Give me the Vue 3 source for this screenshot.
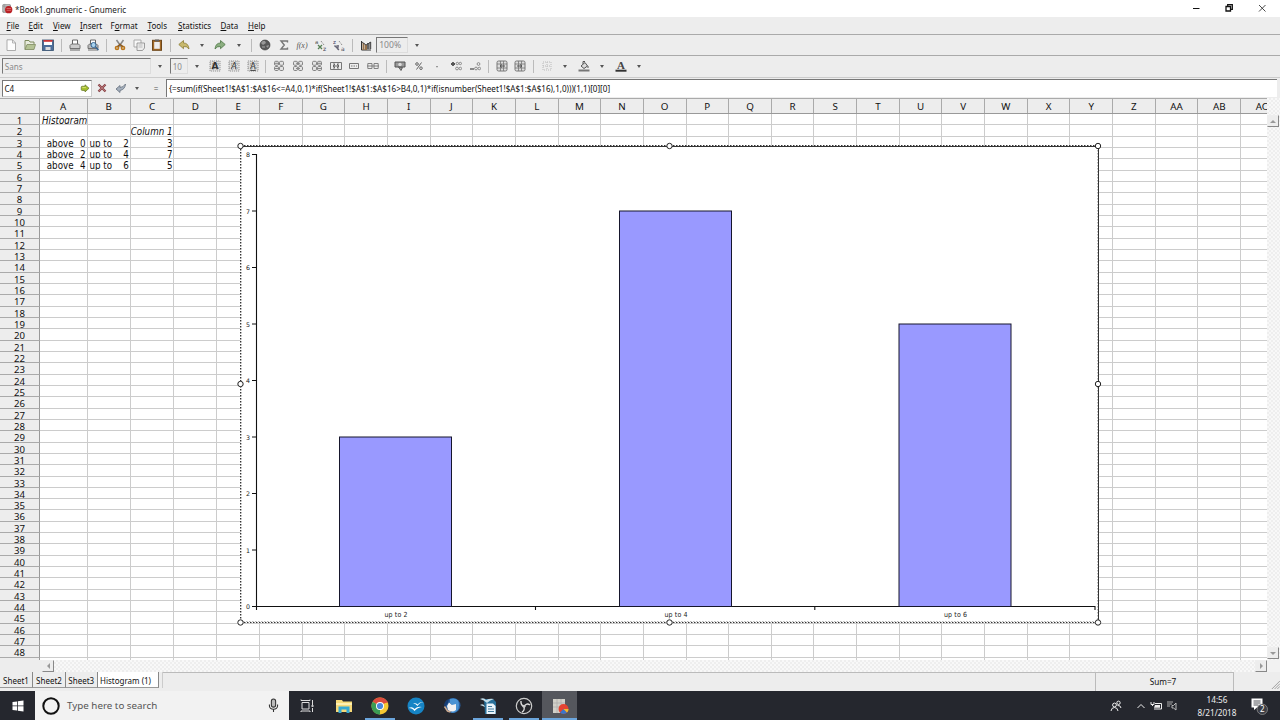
<template>
	<div class="desktop">
		<header class="titlebar">
			<svg class="app-icon" viewBox="0 0 12 12" v-html="ICONS.app" />
			<span class="title">*Book1.gnumeric - Gnumeric</span>
			<div class="window-buttons">
				<svg viewBox="0 0 10 10"><path d="M2 5.5h6.500" stroke="#111" /></svg>
				<svg viewBox="0 0 10 10">
					<path d="M2 3.5h4.5V8H2zM3.7 3V1.7h4.6v4.6H7" fill="none" stroke="#111" stroke-width="1.3" />
				</svg>
				<svg viewBox="0 0 10 10">
					<path d="M2 2l6.5 6.5M8.500 2L2 8.500" stroke="#333" stroke-width="0.9" />
				</svg>
			</div>
		</header>

		<nav class="menubar">
			<span v-for="item in menus" :key="item.label" :style="{ width: item.width + 'px' }">
				{{ item.label.slice(0, item.key) }}<u>{{ item.label[item.key] }}</u>{{ item.label.slice(item.key + 1) }}
			</span>
		</nav>

		<div class="toolbar">
			<template v-for="(name, i) in standardTools" :key="i">
				<i v-if="name === '|'" class="sep" />
				<i v-else-if="name === 'v'" class="drop" />
				<span v-else class="tool"><svg viewBox="0 0 12 12" v-html="ICONS[name]" /></span>
			</template>
			<span class="entry zoom">100%</span>
			<i class="drop" />
		</div>

		<div class="toolbar format">
			<span class="entry font">Sans</span>
			<i class="drop" />
			<span class="entry size">10</span>
			<i class="drop" />
			<template v-for="(name, i) in formatTools" :key="i">
				<i v-if="name === '|'" class="sep" />
				<i v-else-if="name === 'v'" class="drop" />
				<span v-else class="tool"><svg viewBox="0 0 12 12" v-html="ICONS[name]" /></span>
			</template>
		</div>

		<div class="formula-bar">
			<div class="cell-name">
				<span>C4</span>
				<svg viewBox="0 0 10 10">
					<path d="M.8 3.500Q.8 2.500 2 2.500H5V.9L9.500 4.700 5 8.800V7.200H2Q.8 7.200.8 6z" fill="#a3bd2c" stroke="#66752a" stroke-width=".8" />
					<path d="M2 4h4" stroke="#dce87a" />
				</svg>
			</div>
			<svg class="f-cancel" viewBox="0 0 10 10">
				<path d="M1.500 1.500l7 7M8.500 1.500l-7 7" stroke="#8a4448" stroke-width="2.3" />
				<path d="M2 2l6 6M8 2L2 8" stroke="#d09090" stroke-width=".6" />
			</svg>
			<svg class="f-accept" viewBox="0 0 12 10">
				<path d="M1 6l4-3.500v2q3 0 5.500-3.500Q10 6.500 5 7.500V9.500z" fill="#a5b0bd" stroke="#65707e" stroke-width=".8" />
			</svg>
			<i class="drop" />
			<span class="equals">=</span>
			<div class="formula">{=sum(if(Sheet1!$A$1:$A$16&lt;=A4,0,1)*if(Sheet1!$A$1:$A$16&gt;B4,0,1)*if(isnumber(Sheet1!$A$1:$A$16),1,0)))(1,1)[0][0]</div>
		</div>

		<main class="sheet">
			<div class="grid-area">
				<div class="col-heads">
					<div class="corner"></div>
					<div v-for="col in columns" :key="col.name" class="col-head" :style="{ width: col.width + 'px' }">
						{{ col.name }}
					</div>
				</div>
				<div v-for="row in 48" :key="row" class="row">
					<div class="row-head"><span>{{ row }}</span></div>
					<div
						v-for="col in columns"
						:key="col.name"
						class="cell"
						:class="[`col-${col.name}`, { italic: row < 3, left: row === 1 }]"
						:style="{ width: col.width + 'px' }"
					>
						<span v-for="(part, i) in cells[col.name + row]" :key="i">{{ part }}</span>
					</div>
				</div>
				<div class="row rest">
					<div class="row-head"></div>
					<div v-for="col in columns" :key="col.name" class="cell" :style="{ width: col.width + 'px' }"></div>
				</div>

				<svg class="chart" width="866" height="486" viewBox="236 141 866 486">
					<rect x="240.500" y="146.500" width="858" height="476.500" fill="#fff" />
					<path d="M241 146.500H1098.500V622.500" fill="none" stroke="#333" />
					<path d="M240.500 146V622.500H1098.500M241 145.500H1098" fill="none" stroke="#333" stroke-dasharray="1.500 1.500" />
					<path d="M241.500 146V621.500H1098M1097.500 147V622" fill="none" stroke="#888" stroke-width=".6" stroke-dasharray="1.500 1.500" />
					<path d="M256.500 154V610M252 606.500H1095V610M535.500 606v4M814.800 606v4" fill="none" stroke="#111" stroke-width="1.100" />
					<g v-for="n in 9" :key="n">
						<path :d="`M252 ${tickY(n - 1)}h5`" stroke="#111" />
						<text x="250" :y="tickY(n - 1) + 2.500" text-anchor="end">{{ n - 1 }}</text>
					</g>
					<g v-for="bar in bars" :key="bar.label">
						<rect
							:x="bar.x - 56"
							:y="tickY(bar.value)"
							width="112"
							:height="606.5 - tickY(bar.value)"
							fill="#9999ff"
							stroke="#16162c"
						/>
						<text class="bar-label" :x="bar.x + 0.5" y="617.200" text-anchor="middle" textLength="23">{{ bar.label }}</text>
					</g>
					<circle v-for="(p, i) in handles" :key="i" :cx="p[0]" :cy="p[1]" r="2.700" fill="#fff" stroke="#222" />
				</svg>
			</div>
			<div class="vscroll">
				<div class="scroll-btn up"></div>
				<div class="scroll-btn down"></div>
			</div>
		</main>

		<div class="hscroll">
			<div class="hpad"></div>
			<div class="track">
				<div class="scroll-btn prev"></div>
				<div class="scroll-btn next"></div>
			</div>
			<div class="hend"></div>
		</div>

		<div class="bottom">
			<div class="tabs">
				<span v-for="tab in tabs" :key="tab.name" :class="{ active: tab.active }" :style="{ width: tab.width + 'px' }">
					{{ tab.name }}
				</span>
			</div>
			<div class="status"></div>
			<div class="sum">Sum=7</div>
			<svg class="grip" viewBox="0 0 10 10"><path d="M1 10l9-9M4 10l6-6M7 10l3-3" stroke="#999" /></svg>
		</div>

		<footer class="taskbar">
			<div class="start">
				<svg viewBox="0 0 12 12"><path d="M.5 2L5 1.400v4.100H.5zM5.800 1.300L11.500.5v5H5.800zM.5 6.300H5v4.200L.5 9.900zM5.800 6.300h5.700v5.200l-5.700-.8z" fill="#fff" /></svg>
			</div>
			<div class="search">
				<svg class="cortana" viewBox="0 0 20 20"><circle cx="10" cy="10" r="7.700" fill="none" stroke="#111" stroke-width="2" /></svg>
				<span>Type here to search</span>
				<svg class="mic" viewBox="0 0 10 14">
					<rect x="3" y="1" width="4" height="7.500" rx="2" fill="#bbb" stroke="#333" />
					<path d="M1.200 6v1.500Q1.500 10.500 5 10.500T8.800 7.500V6M5 10.500V13" fill="none" stroke="#333" />
				</svg>
			</div>
			<div v-for="app in apps" :key="app.icon" class="app" :class="{ running: app.running, focused: app.focused }" :style="{ width: app.width + 'px' }">
				<svg viewBox="0 0 18 18" v-html="ICONS[app.icon]" />
			</div>
			<div class="tray">
				<svg class="people" viewBox="0 0 12 12" fill="none" stroke="#eee"><circle cx="4.500" cy="5" r="1.900" /><circle cx="8.500" cy="2.800" r="1.700" /><path d="M1 11q.4-3.500 3.500-3.500T8 11M7.500 5.500Q10.500 5 11 8" /></svg>
				<svg class="chevron" viewBox="0 0 10 10"><path d="M1.500 7L5 3.500 8.500 7" fill="none" stroke="#eee" /></svg>
				<svg class="battery" viewBox="0 0 12 10"><path d="M1 1v2.500h3V1M2.500 3.500V5M4 8h7.500V2.500H5" fill="none" stroke="#eee" /><path d="M5 4h5v2.800H4z" fill="#eee" /></svg>
				<svg class="sound" viewBox="0 0 12 10"><path d="M6 4.500h1.500L10 2v7L7.500 7H6z" fill="none" stroke="#bbb" /><path d="M1 1h6M1 3h5M1 5h3" stroke="#ccc" stroke-width=".8" /></svg>
				<div class="clock"><span>14:56</span><span>8/21/2018</span></div>
				<svg class="notes" viewBox="0 0 20 18">
					<path d="M1.500 1.500h11v9H7L4 13v-2.500H1.500z" fill="#fff" />
					<path d="M3.500 4h7M3.500 6h7M3.500 8h5" stroke="#25272e" stroke-width=".8" />
					<circle cx="12.300" cy="12.300" r="5.200" fill="#3b3d44" stroke="#999" stroke-width=".7" />
					<text x="12.300" y="15.200" text-anchor="middle">2</text>
				</svg>
			</div>
		</footer>
	</div>
</template>

<script setup>
const align = (d) =>
	`<g fill="#e4e4e4" stroke="#777" stroke-width=".9"><rect x="1.500" y="1.300" width="4" height="4" rx="1.200"/><rect x="6.500" y="1.300" width="4" height="4" rx="1.200"/><rect x="1.500" y="6.500" width="4" height="4" rx="1.200"/><rect x="6.500" y="6.500" width="4" height="4" rx="1.200"/></g><path d="${d}" stroke="#888"/>`;
const letter = (style) =>
	`<rect x=".5" y=".5" width="11" height="11" fill="#ddd"/><path d="M1 1h10v10H1zM1 4h10M1 8h10M4 1v10M8 1v10" fill="none" stroke="#888" stroke-width=".8" stroke-dasharray="1 1"/><text x="6" y="9.200" text-anchor="middle" font-size="9" font-family="DejaVu Sans" fill="#333" style="${style}">A</text>`;

const ICONS = {
	app: '<path d="M1 2h8v8H1z" fill="#ddd" stroke="#777"/><path d="M3 1v8M1 4h8" stroke="#999"/><circle cx="7.300" cy="7.300" r="4" fill="#b91f24"/><path d="M5 6h5M5 8h5" stroke="#d66"/>',
	new: '<path d="M2 .8h5.500L10.500 4v7.500H2z" fill="#fdfdfd" stroke="#999" stroke-width=".8"/><path d="M7.500 1v3h3" fill="none" stroke="#999" stroke-width=".7"/>',
	open: '<path d="M1 10.500V1.500h4l1 1.500h4v2" fill="#e8ebdd" stroke="#7e8a5e"/><path d="M1 10.500L3 5.500h8.500l-1.500 5z" fill="#b4c294" stroke="#7e8a5e" stroke-width=".8"/>',
	save: '<rect x=".5" y="1" width="11" height="10.500" fill="#4c6d9a" stroke="#34506f" stroke-width=".8"/><path d="M2 1h8v5H2z" fill="#fff"/><path d="M1.500 1h9v1.800h-9z" fill="#c83334"/><path d="M3.500 8h5v3h-5z" fill="#ddd"/>',
	print: '<path d="M3.500 5V1h5v4" fill="#fff" stroke="#666"/><path d="M1 9.500V6.500L2.500 5h7L11 6.500v3z" fill="#ccc" stroke="#666" stroke-width=".9"/><path d="M1 11h10" stroke="#666"/>',
	preview: '<path d="M3.500 5V1h5v4" fill="#fff" stroke="#666"/><path d="M1 9.500V6.500L2.500 5h7L11 6.500v3zM1 11h10" fill="#bbb" stroke="#666" stroke-width=".9"/><circle cx="6.500" cy="6" r="2.500" fill="#a9d3ef" stroke="#346491"/><path d="M8.500 8l3 3" stroke="#346491" stroke-width="1.500"/>',
	cut: '<path d="M2.500 1l5 7M9.500 1l-5 7" stroke="#888" stroke-width="1.500"/><circle cx="3" cy="9" r="1.500" fill="none" stroke="#bd781b" stroke-width="1.700"/><circle cx="9" cy="9" r="1.500" fill="none" stroke="#bd781b" stroke-width="1.700"/><path d="M3.500 7.500L6 5.500l3 2" fill="none" stroke="#8a5a22" stroke-width="1.500"/>',
	copy: '<path d="M1 1h7v7H1z" fill="#f8f8f8" stroke="#aaa"/><path d="M4 4h7.500v5l-2 2.500H4z" fill="#eee" stroke="#888" stroke-width=".8"/><path d="M5.500 6h4M5.500 8h4" stroke="#bbb"/>',
	paste: '<rect x="1.500" y="1.300" width="9" height="10" fill="#a46b28" stroke="#6d471b"/><path d="M3.200 3h5.600v6.800H3.200z" fill="#eee"/><path d="M4 .5h4v2H4z" fill="#666"/>',
	undo: '<path d="M.8 5.500L5.500 1.500v2.500q5 0 5.500 6-2-3-5.500-2.500v2.200z" fill="#c8b96c" stroke="#8c7c35" stroke-width=".8"/>',
	redo: '<path d="M11.200 5.500L6.500 1.500v2.500q-5 0-5.500 6 2-3 5.500-2.500v2.200z" fill="#8caf81" stroke="#4e7645" stroke-width=".8"/>',
	link: '<circle cx="6" cy="6" r="5" fill="#595959" stroke="#333" stroke-width=".6"/><path d="M2 4q2-3 4-2l1 2-3 2zM7 7l3-1-1 3z" fill="#999"/><path d="M3 8h3" stroke="#aaa"/>',
	sum: '<path d="M9.500 3.500V2H3l3.300 4L3 10h6.500V8.500" fill="none" stroke="#777" stroke-width="1.400"/>',
	fx: '<text x="6" y="8.800" text-anchor="middle" font-size="8" font-style="italic" font-family="Liberation Serif" fill="#555">f(x)</text>',
	asc: '<text x="0" y="5" font-size="5.500" font-family="DejaVu Sans" fill="#555">a</text><path d="M3 6l4 4M7 6l-4 4" stroke="#568054" stroke-width="1.300"/><path d="M6 2l3 4" stroke="#777" stroke-dasharray="1 1"/><text x="8" y="11.500" font-size="6" font-family="DejaVu Sans" fill="#445">z</text>',
	desc: '<text x="0" y="5" font-size="5.500" font-family="DejaVu Sans" fill="#446">z</text><path d="M2 7l4 4M5 6v5M1 7h5" stroke="#667" stroke-width="1.200"/><path d="M6 2l3 4" stroke="#777" stroke-dasharray="1 1"/><text x="8" y="11.500" font-size="6" font-family="DejaVu Sans" fill="#445">a</text>',
	chart: '<path d="M1.500 2v9h9.500" fill="none" stroke="#333"/><path d="M3.500 4v7M6 6v5" stroke="#94704a" stroke-width="2"/><path d="M8 4v6M10.300 3v7" stroke="#555" stroke-width="1.800"/><path d="M2 3l4 3 5-3" fill="none" stroke="#444"/>',
	bold: letter("font-weight:bold"),
	italic: letter("font-style:italic;font-size:8px"),
	underline: letter("text-decoration:underline;font-size:8px"),
	left: align("M2 3.300h3M2 8.500h3"),
	center: align("M4 3.300h4M4 8.500h4"),
	right: align("M7 3.300h3M7 8.500h3"),
	span: '<path d="M.5 2.500h11v7H.5zM4 2.500v7M8 2.500v7" fill="none" stroke="#777"/><path d="M3 6h6M5 4L3 6l2 2M7 4l2 2-2 2" fill="none" stroke="#666"/>',
	merge: '<path d="M1.500 3.500h9v5h-9z" fill="none" stroke="#777"/><path d="M3 6h6" stroke="#777" stroke-dasharray="1.500 1"/>',
	split: '<path d="M.8 3.500h4.200v5H.8zM7 3.500h4.200v5H7zM0 6h12" fill="none" stroke="#777" stroke-width=".9"/>',
	money: '<path d="M1 2h10v5H1z" fill="#999" stroke="#555"/><circle cx="6" cy="4.500" r="1.700" fill="#ddd"/><path d="M4.500 7l4 .5L7 10.500z" fill="#999" stroke="#555" stroke-width=".9"/>',
	percent: '<path d="M8.500 2.500l-5 7" stroke="#666"/><circle cx="4" cy="4" r="1.300" fill="none" stroke="#666"/><circle cx="8" cy="8.200" r="1.300" fill="none" stroke="#666"/>',
	comma: '<path d="M5.500 6h1v1.300h-1z" fill="#444"/>',
	more: '<path d="M1 4h4M3 2v4" stroke="#555" stroke-width="1.800"/><g fill="none" stroke="#777" stroke-width=".8"><circle cx="7.300" cy="3.500" r="1.200"/><circle cx="7" cy="8.500" r="1.400"/><circle cx="10.300" cy="8.500" r="1.300"/><circle cx="10.300" cy="3.500" r="1.200"/></g>',
	less: '<path d="M1 9h4" stroke="#666" stroke-width="1.500"/><g fill="none" stroke="#777" stroke-width=".8"><circle cx="9.500" cy="4" r="1.400"/><circle cx="7" cy="8.500" r="1.400"/><circle cx="10.300" cy="8.500" r="1.300"/></g>',
	outdent: '<rect x="1" y="1" width="10" height="10" rx="1.500" fill="#ddd" stroke="#777"/><path d="M1 4h10M1 8h10M4.500 1v10M7.500 1v10" fill="none" stroke="#777" stroke-width=".8"/><path d="M9 6H4M6 4.500L4 6l2 1.500" fill="none" stroke="#555"/>',
	indent: '<rect x="1" y="1" width="10" height="10" rx="1.500" fill="#ddd" stroke="#777"/><path d="M1 4h10M1 8h10M4.500 1v10M7.500 1v10" fill="none" stroke="#777" stroke-width=".8"/><path d="M3 6h5M6 4.500L8 6 6 7.500" fill="none" stroke="#555"/>',
	border: '<path d="M2 2h8v8H2zM6 2v8M2 6h8" fill="none" stroke="#bbb" stroke-dasharray="1 1"/>',
	fill: '<path d="M3 6l4-3.500L9.500 6 6 8.500z" fill="#ddd" stroke="#555"/><path d="M5 4V1.500h2M10 6v2" fill="none" stroke="#555"/><path d="M.5 10.500h11" stroke="#777" stroke-width="2"/>',
	color: '<text x="6" y="9" text-anchor="middle" font-size="11" font-weight="bold" font-family="Liberation Serif" fill="#444">A</text><path d="M.5 10.700h11" stroke="#333" stroke-width="2"/>',
	taskview: '<path d="M4 5.500h7v6.500H4zM3 3.500V2.500M3 3.500h9V2.500M3 15v-1h9v1M14.500 3v5M14.500 11v4" fill="none" stroke="#ddd"/><path d="M13.500 9h2" stroke="#fff" stroke-width="1.500"/>',
	explorer: '<path d="M1 3h6l1 1.500h9V15H1z" fill="#f6d978"/><path d="M1 6h16v2H1z" fill="#fff0b0"/><path d="M3.500 16V9.500h11V16h-3v-3.500h-5V16z" fill="#35a9d4"/>',
	chrome: '<circle cx="9" cy="9" r="8.500" fill="#f6c833"/><path d="M9 9L1.600 4.750A8.500 8.500 0 0 1 16.400 4.750z" fill="#dc4b3e"/><path d="M9 9L1.600 4.750A8.500 8.500 0 0 0 9 17.500z" fill="#3b9c55"/><path d="M9 5h7.500" stroke="#dc4b3e" stroke-width="1.500"/><circle cx="9" cy="9" r="4" fill="#fff"/><circle cx="9" cy="9" r="3.100" fill="#4b88db"/>',
	gulls: '<circle cx="9" cy="9" r="8.500" fill="#1684c5"/><path d="M6 6.500q3-1 4.500 1 2-3 6-2.500-4 .5-6 4-1.500-2.500-4.500-2.500M1.500 11q4-2 6 1 3-3 7.500-2-4.500.5-7.500 4-2-3-6-3" fill="#fff"/>',
	thunderbird: '<circle cx="10" cy="8.500" r="7.500" fill="#285e9d"/><path d="M7 2q9-2 9 6t-8 8q5-6-1-10z" fill="#4a93d3"/><path d="M4 9l2-3.500 3 2.500 4-1v6q-4 3-8 0z" fill="#f2f2f2"/><path d="M1 8q1-5 5-6L5 6 2 10z" fill="#183d72"/><path d="M1.500 9.500l3 4.500 3 1" fill="none" stroke="#cba990" stroke-width="1.500"/>',
	writer: '<path d="M5 2h9l3 3v12H6z" fill="#276f99"/><path d="M7.500 6.500h6.500l2.500 2.500v8h-9z" fill="#eaf4fb"/><path d="M9 9.500h4M9 12h6M9 14.500h6" stroke="#427d9e"/><path d="M1 2q4-2 6 1 4-2 8-1-4 1-7 4Q5 3 1 2M1 8q4-2 5 2-2-1-5-2" fill="#c2dce8"/>',
	obs: '<circle cx="9" cy="9" r="7.700" fill="#25262b" stroke="#ccc" stroke-width="1.200"/><g fill="none" stroke="#ddd" stroke-width="1.400"><path d="M9 9.500Q5.500 8 6 4M9 9.500Q11.500 5.500 15 8M9 9.500q1 4-2 5.500"/></g><circle cx="9" cy="9.300" r="1.500" fill="#ccc"/>',
	gnumeric: '<path d="M2 2h12v14H2z" fill="#d1d0c8"/><path d="M2 6h12M2 10h12M6 2v14M10 2v14" stroke="#aaa" stroke-width=".7"/><circle cx="12.500" cy="12" r="5" fill="#e44332"/><path d="M12.500 12L9 15.600A5 5 0 0 0 16 15.600z" fill="#3976cb"/><path d="M12.500 12l3.500 3.500q1.500-1.500 1.500-3.500z" fill="#efbd2d"/>',
};

const menus = [
	{ label: "File", key: 0, width: 22 },
	{ label: "Edit", key: 0, width: 24.5 },
	{ label: "View", key: 0, width: 27 },
	{ label: "Insert", key: 0, width: 30.5 },
	{ label: "Format", key: 1, width: 37 },
	{ label: "Tools", key: 0, width: 30.5 },
	{ label: "Statistics", key: 0, width: 42.5 },
	{ label: "Data", key: 0, width: 27.5 },
	{ label: "Help", key: 0, width: 30 },
];
const standardTools = "new open save | print preview | cut copy paste | undo v redo v | link sum fx asc desc | chart".split(" ");
const formatTools =
	"bold italic underline | left center right span merge split | money percent comma more less | outdent indent | border v fill v color v".split(" ");

const names = [..."ABCDEFGHIJKLMNOPQRSTUVWXYZ", "AA", "AB", "AC"];
const firstWidths = [47.5, 43.2, 43.8, 42.8];
const columns = names.map((name, i) => ({ name, width: firstWidths[i] ?? 42.66 }));
const cells = {
	A1: ["Histogram"],
	C2: ["Column 1"],
	A3: ["above", "0"],
	B3: ["up to", "2"],
	C3: ["3"],
	A4: ["above", "2"],
	B4: ["up to", "4"],
	C4: ["7"],
	A5: ["above", "4"],
	B5: ["up to", "6"],
	C5: ["5"],
};

const tickY = (n) => 606.5 - n * 56.5;
const bars = [
	{ label: "up to 2", value: 3, x: 395.5 },
	{ label: "up to 4", value: 7, x: 675.5 },
	{ label: "up to 6", value: 5, x: 955 },
];
const handles = [
	[240.5, 146], [669.5, 146], [1098, 146],
	[240.5, 384], [1098, 384],
	[240.5, 622.5], [669.5, 622.5], [1098, 622.5],
];

const tabs = [
	{ name: "Sheet1", width: 33 },
	{ name: "Sheet2", width: 33 },
	{ name: "Sheet3", width: 31.5 },
	{ name: "Histogram (1)", width: 61, active: true },
];
const apps = [
	{ icon: "taskview", width: 36 },
	{ icon: "explorer", width: 37 },
	{ icon: "chrome", width: 36, running: true },
	{ icon: "gulls", width: 36 },
	{ icon: "thunderbird", width: 36 },
	{ icon: "writer", width: 36, running: true },
	{ icon: "obs", width: 36, running: true },
	{ icon: "gnumeric", width: 35, running: true, focused: true },
];
</script>

<style>
body {
	margin: 0;
}
</style>

<style scoped>
* {
	box-sizing: border-box;
}
.desktop {
	display: flex;
	flex-direction: column;
	width: 1280px;
	height: 720px;
	overflow: hidden;
	background: #ededed;
	color: #111;
	font: 8.1px "Noto Sans", sans-serif;
}
svg {
	flex: none;
	display: block;
}
.titlebar {
	display: flex;
	align-items: center;
	height: 17px;
	padding-left: 1.5px;
	background: #fff;
}
.app-icon {
	width: 11px;
	height: 11px;
}
.title {
	margin: 1px 0 0 2.5px;
	font-size: 8.1px;
	color: #222;
}
.window-buttons {
	display: flex;
	gap: 23px;
	margin-left: auto;
	padding: 0 13px 2px 0;
}
.window-buttons svg {
	width: 10px;
	height: 10px;
}
.menubar {
	display: flex;
	align-items: center;
	height: 18px;
	padding-left: 6.5px;
	border-bottom: 1px solid #aaa;
	white-space: nowrap;
	font-size: 8px;
}
.menubar span {
	flex: none;
}
.toolbar {
	display: flex;
	align-items: center;
	height: 21px;
	padding-left: 1.7px;
	border-bottom: 1px solid #aaa;
}
.tool {
	display: flex;
	justify-content: center;
	width: 18.6px;
}
.tool svg {
	width: 12px;
	height: 12px;
}
.format {
	height: 22px;
	padding-bottom: 1px;
	border-bottom-color: #ccc;
}
.format .tool {
	width: 18.75px;
}
.sep {
	flex: none;
	width: 8px;
	height: 13px;
	background: linear-gradient(#bbb, #bbb) center / 1px 100% no-repeat;
}
.drop {
	display: flex;
	justify-content: center;
	width: 18px;
}
.drop::after {
	content: "";
	border: 2.5px solid transparent;
	border-top: 3px solid #555;
	border-bottom: 0;
}
.entry {
	height: 16px;
	padding-left: 2px;
	border: 1px solid #ddd;
	border-top-color: #777;
	border-left-color: #777;
	color: #8a8a8a;
	line-height: 15px;
	font-size: 8.1px;
}
.zoom {
	width: 32px;
	margin-left: 1px;
	font-size: 8.6px;
}
.font {
	width: 149px;
}
.size {
	width: 18px;
	margin-left: 1px;
}
.formula-bar {
	display: flex;
	align-items: center;
	height: 20px;
	padding-left: 1.5px;
}
.cell-name {
	display: flex;
	align-items: center;
	justify-content: space-between;
	width: 90px;
	height: 17px;
	padding: 0 1px 0 2px;
	border: 1px solid #ccc;
	border-top-color: #777;
	border-left-color: #777;
	background: #fff;
}
.cell-name svg {
	width: 10px;
	height: 9px;
}
.f-cancel {
	width: 10px;
	height: 10px;
	margin-left: 5px;
}
.f-accept {
	width: 12px;
	height: 10px;
	margin: 0 1.5px 0 8px;
}
.equals {
	width: 20px;
	text-align: center;
	color: #555;
}
.formula {
	flex: none;
	width: 1111px;
	height: 18px;
	border-top: 1px solid #777;
	border-left: 1px solid #777;
	background: #fff;
	padding-left: 2px;
	line-height: 17px;
	white-space: nowrap;
}
.sheet {
	display: flex;
	height: 562px;
}
.grid-area {
	position: relative;
	width: 1267px;
	overflow: hidden;
	background: #fff;
}
.col-heads,
.row {
	display: flex;
}
.col-heads {
	height: 16px;
	background: #ededed;
	border-top: 1px solid #aaa;
	border-bottom: 1px solid #999;
}
.corner {
	flex: none;
	width: 40px;
	border-right: 1px solid #aaa;
}
.col-head {
	flex: none;
	border-right: 1px solid #aaa;
	text-align: center;
	font-size: 9.8px;
	line-height: 15px;
}
.row {
	height: 11.335px;
}
.row-head {
	flex: none;
	width: 40px;
	border-right: 1px solid #999;
	border-bottom: 1px solid #aaa;
	background: #ededed;
	text-align: center;
	font-size: 9.6px;
	line-height: 13px;
}
.cell {
	display: flex;
	justify-content: flex-end;
	flex: none;
	padding: 0 1px 0 2px;
	overflow: hidden;
	border-right: 1px solid #ccc;
	border-bottom: 1px solid #ccc;
	font: 9.7px/14px "DejaVu Sans Condensed", "DejaVu Sans", sans-serif;
	white-space: nowrap;
}
.cell span + span {
	width: 12px;
	text-align: right;
}
.col-B span + span {
	width: 17px;
}
.italic {
	font-style: italic;
}
.left {
	justify-content: flex-start;
}
.chart {
	position: absolute;
	left: 236px;
	top: 43px;
}
.chart text {
	font: 6.3px "DejaVu Sans", sans-serif;
	fill: #222;
}
.chart .bar-label {
	font: 7px "DejaVu Sans Condensed", "DejaVu Sans", sans-serif;
}
.vscroll,
.track {
	background: repeating-conic-gradient(#eee 0 25%, #f8f8f8 0 50%) 0 0 / 4px 4px;
}
.vscroll {
	display: flex;
	flex-direction: column;
	justify-content: space-between;
	width: 13px;
	padding: 17px 0 1px;
}
.scroll-btn {
	display: flex;
	align-items: center;
	justify-content: center;
	width: 12px;
	height: 12px;
	border: 1px solid #eee;
	border-right-color: #888;
	border-bottom-color: #888;
	background: #ededed;
}
.scroll-btn::after {
	content: "";
	border: 3px solid transparent;
}
.up::after {
	border-top: 0;
	border-bottom-color: #999;
}
.down::after {
	border-bottom: 0;
	border-top-color: #999;
}
.prev::after {
	border-left: 0;
	border-right-color: #999;
}
.next::after {
	border-right: 0;
	border-left-color: #999;
}
.hscroll {
	display: flex;
	height: 12px;
}
.hpad {
	width: 42px;
}
.track {
	display: flex;
	justify-content: space-between;
	width: 1225px;
}
.hend {
	flex: 1;
	background: #f2f2f2;
}
.bottom {
	display: flex;
	height: 19px;
}
.tabs {
	display: flex;
	width: 163px;
	height: 16px;
	border-right: 1px solid #ccc;
}
.tabs span {
	border-right: 1px solid #888;
	border-bottom: 1px solid #999;
	text-align: center;
	white-space: nowrap;
	line-height: 17px;
	font-size: 8px;
}
.tabs .active {
	background: #fff;
	padding-right: 4px;
}
.status {
	width: 932px;
	border-top: 1px solid #bbb;
}
.sum {
	width: 139px;
	padding-right: 3px;
	border: 1px solid #bbb;
	border-bottom: 0;
	text-align: center;
	line-height: 18px;
	font-size: 8.2px;
}
.grip {
	width: 9px;
	height: 9px;
	margin: 8px 0 0 auto;
}
.taskbar {
	display: flex;
	height: 29px;
	background: #25272e;
	color: #eee;
}
.start {
	display: flex;
	align-items: center;
	justify-content: center;
	width: 35px;
}
.start svg {
	width: 12px;
	height: 12px;
}
.search {
	display: flex;
	align-items: center;
	width: 254px;
	padding: 0 10px 0 6px;
	background: #f2f2f2;
	color: #555;
	font-size: 9.8px;
}
.cortana {
	width: 20px;
	height: 20px;
	margin-right: 6px;
}
.mic {
	width: 11px;
	height: 15px;
	margin-left: auto;
}
.app {
	display: flex;
	align-items: center;
	justify-content: center;
}
.app svg {
	width: 18px;
	height: 18px;
}
.running {
	background: linear-gradient(#6ba5dc, #6ba5dc) bottom / 30px 2px no-repeat;
}
.focused {
	background-color: #55575d;
	background-size: 100% 2px;
}
.tray {
	display: flex;
	align-items: center;
	margin-left: auto;
	padding-right: 10px;
}
.people {
	width: 12px;
	height: 12px;
	margin-right: 14px;
}
.chevron {
	width: 10px;
	height: 10px;
}
.battery,
.sound {
	width: 12px;
	height: 10px;
	margin-left: 4px;
}
.clock {
	display: flex;
	flex-direction: column;
	align-items: center;
	width: 44px;
	margin: 0 11px 0 17px;
	font-size: 8.2px;
	line-height: 13px;
}
.notes {
	width: 20px;
	height: 18px;
}
.notes text {
	fill: #fff;
	font-size: 8px;
}
</style>
